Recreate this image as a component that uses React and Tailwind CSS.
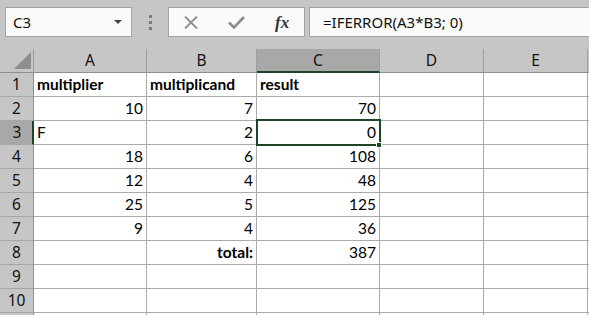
import React from "react";

const COLS = ["A", "B", "C", "D", "E", "F"];

const data = [
  [{ t: "multiplier", b: true }, { t: "multiplicand", b: true }, { t: "result", b: true }],
  [{ t: "10", r: true }, { t: "7", r: true }, { t: "70", r: true }],
  [{ t: "F" }, { t: "2", r: true }, { t: "0", r: true }],
  [{ t: "18", r: true }, { t: "6", r: true }, { t: "108", r: true }],
  [{ t: "12", r: true }, { t: "4", r: true }, { t: "48", r: true }],
  [{ t: "25", r: true }, { t: "5", r: true }, { t: "125", r: true }],
  [{ t: "9", r: true }, { t: "4", r: true }, { t: "36", r: true }],
  [{ t: "" }, { t: "total:", r: true, b: true }, { t: "387", r: true }],
  [],
  [],
  [],
];

const uiFont = { fontFamily: '"Noto Sans", "Open Sans", sans-serif' };
const cellFont = { fontFamily: 'Lato, "Liberation Sans", sans-serif' };

export default function App() {
  return (
    <div className="relative w-[589px] h-[315px] overflow-hidden bg-[#c6c6c6]">
      {/* Formula bar */}
      <div className="flex h-[49px] items-start pt-[7px]">
        <div
          className="ml-[5px] flex h-[30px] w-[127px] items-center justify-between border border-[#a3a3a3] bg-[#fafafa] pl-[7px] pr-[9px] text-[15px] text-[#111]"
          style={uiFont}
        >
          <span className="leading-none">C3</span>
          <svg width="8" height="4" viewBox="0 0 8 4">
            <polygon points="0,0 8,0 4,4" fill="#444" />
          </svg>
        </div>
        <div className="ml-[17px] mt-[8px] flex flex-col gap-[3px]">
          <div className="h-[3px] w-[3px] bg-[#7b7b7b]" />
          <div className="h-[3px] w-[3px] bg-[#7b7b7b]" />
          <div className="h-[3px] w-[3px] bg-[#7b7b7b]" />
        </div>
        <div className="ml-[16px] flex h-[30px] w-[137px] items-center border border-[#a3a3a3] bg-[#fafafa]">
          <svg className="ml-[15px]" width="14" height="13" viewBox="0 0 14 13">
            <path d="M1 0.5 L13 12.5 M13 0.5 L1 12.5" stroke="#8c8c8c" strokeWidth="1.8" fill="none" />
          </svg>
          <svg className="ml-[30px]" width="17" height="13" viewBox="0 0 17 13">
            <path d="M1 6.5 L6 11.5 L16 1" stroke="#8c8c8c" strokeWidth="2.6" fill="none" />
          </svg>
          <span
            className="ml-[30px] text-[17px] font-bold italic leading-none text-[#333]"
            style={{ fontFamily: '"Liberation Serif", "DejaVu Serif", serif' }}
          >
            fx
          </span>
        </div>
        <div
          className="ml-[4px] flex h-[30px] flex-1 items-center border border-r-0 border-[#a3a3a3] bg-[#fafafa] pl-[13px] text-[15px] text-[#111]"
          style={uiFont}
        >
          <span className="leading-none">=IFERROR(A3*B3; 0)</span>
        </div>
      </div>

      {/* Grid */}
      <div className="grid grid-cols-[34px_113px_110px_123px_104px_104px_1fr] auto-rows-[24px]">
        {/* Header row */}
        <div className="relative border-r border-b border-r-[#9e9e9e] border-b-[#8f8f8f] bg-[#c6c6c6]">
          <svg className="absolute left-[14px] top-[3px]" width="17" height="17" viewBox="0 0 17 17">
            <polygon points="17,0 17,17 0,17" fill="#8e8e8e" />
          </svg>
        </div>
        {COLS.map((c) => (
          <div
            key={c}
            className={
              c === "C"
                ? "flex justify-center border-r border-b-2 border-r-[#9e9e9e] border-b-[#1d4427] bg-[#a8a8a8] text-[15.5px] leading-[23px] text-[#111]"
                : "flex justify-center border-r border-b border-r-[#9e9e9e] border-b-[#8f8f8f] bg-[#c6c6c6] text-[15.5px] leading-[23px] text-[#111]"
            }
            style={uiFont}
          >
            {c === "F" ? "" : c}
          </div>
        ))}

        {data.map((row, ri) => (
          <React.Fragment key={ri}>
            <div
              className={
                ri === 2
                  ? "flex justify-center border-r-2 border-b border-r-[#1d4427] border-b-[#a6a6a6] bg-[#a8a8a8] pl-[2px] text-[15.5px] leading-[23px] text-[#111]"
                  : "flex justify-center border-r border-b border-r-[#8f8f8f] border-b-[#a6a6a6] bg-[#c6c6c6] text-[15.5px] leading-[23px] text-[#111]"
              }
              style={uiFont}
            >
              {ri < 10 ? ri + 1 : ""}
            </div>
            {COLS.map((c, ci) => {
              const cell = row[ci];
              return (
                <div
                  key={c}
                  className={
                    "flex whitespace-nowrap border-r border-b border-[#ababab] bg-white text-[15.5px] leading-[23px] text-black " +
                    (cell && cell.r ? "justify-end pr-[3px] " : "justify-start pl-[3px] ") +
                    (cell && cell.b ? "font-bold" : "font-normal")
                  }
                  style={cellFont}
                >
                  {cell ? cell.t : ""}
                </div>
              );
            })}
          </React.Fragment>
        ))}
      </div>

      {/* Selection of C3 */}
      <div className="pointer-events-none absolute left-[256px] top-[119px] h-[27px] w-[125px] border-2 border-[#1d4427]" />
      <div className="pointer-events-none absolute left-[376px] top-[142px] h-[6px] w-[6px] border border-white bg-[#1d4427]" />
    </div>
  );
}
